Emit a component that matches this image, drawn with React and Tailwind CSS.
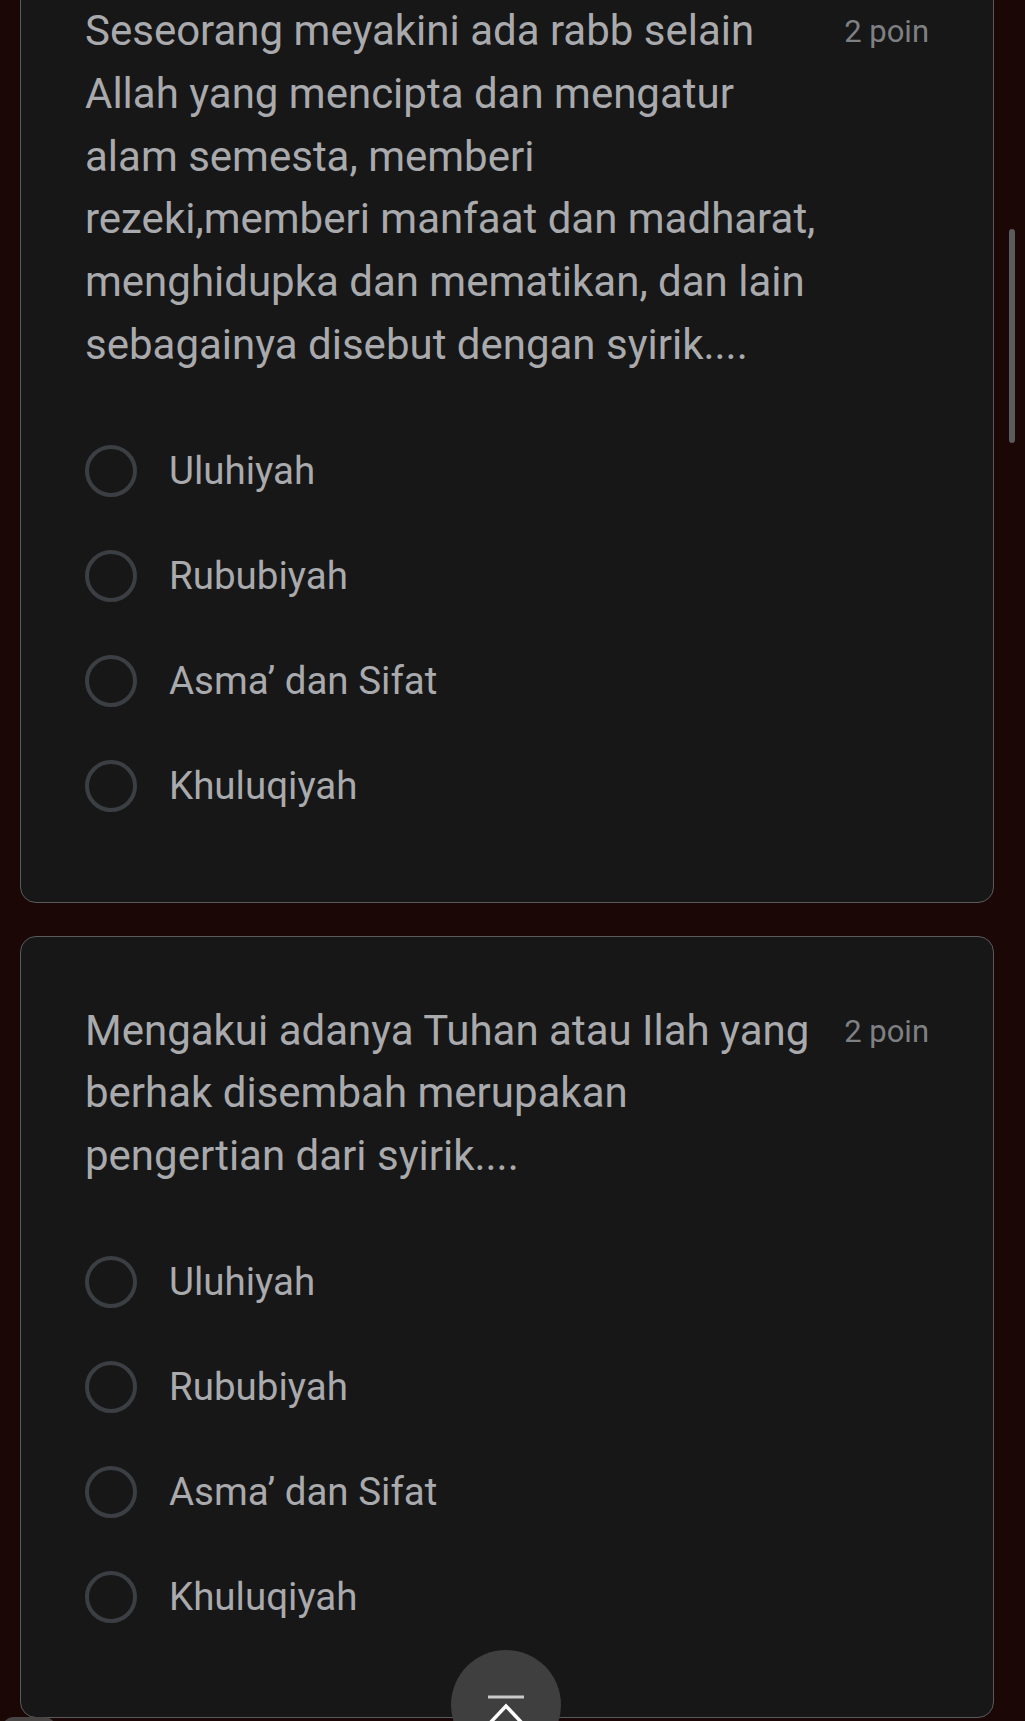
const OPTIONS = ['Uluhiyah', 'Rububiyah', 'Asma’ dan Sifat', 'Khuluqiyah']

const QUESTIONS = [
  {
    id: 'q1',
    title:
      'Seseorang meyakini ada rabb selain Allah yang mencipta dan mengatur alam semesta, memberi rezeki,memberi manfaat dan madharat, menghidupka dan mematikan, dan lain sebagainya disebut dengan syirik....',
    points: '2 poin',
  },
  {
    id: 'q2',
    title: 'Mengakui adanya Tuhan atau Ilah yang berhak disembah merupakan pengertian dari syirik....',
    points: '2 poin',
  },
]

function Radio({ label }) {
  return (
    <label className="flex h-[105px] items-center">
      <span className="block h-[52px] w-[52px] shrink-0 rounded-full border-[4px] border-[#3b3e42]" />
      <span className="ml-[32px] text-[38.5px] leading-[52px] text-[#a9aaae]">{label}</span>
    </label>
  )
}

function QuestionCard({ q, first }) {
  return (
    <div
      className={
        'rounded-[16px] border border-[#5a5a5e] bg-[#171717] pl-[64px] pr-[64px] ' +
        (first ? '-mt-[63px] pt-[62px] pb-[63px]' : 'pt-[63px] pb-[67px]')
      }
    >
      <div className="flex items-start">
        <div className="w-[742px] text-[42px] leading-[62.75px] text-[#a9aaae]">{q.title}</div>
        <div className="ml-auto pt-[12px] text-[31px] leading-[40px] text-[#7f8083] whitespace-nowrap">{q.points}</div>
      </div>
      <div className="mt-[42px] flex flex-col">
        {OPTIONS.map((o) => (
          <Radio key={o} label={o} />
        ))}
      </div>
    </div>
  )
}

export default function App() {
  return (
    <div
      className="relative h-[1721px] w-[1025px] overflow-hidden bg-[#1c0707]"
      style={{ fontFamily: 'Roboto, "Noto Sans", sans-serif' }}
    >
      <div className="flex flex-col gap-[33px] pl-[20px] pr-[31px]">
        {QUESTIONS.map((q, i) => (
          <QuestionCard key={q.id} q={q} first={i === 0} />
        ))}
      </div>

      {/* scrollbar thumb */}
      <div className="absolute left-[1009px] top-[229px] h-[214px] w-[6px] rounded-full bg-[#5b5b5b]" />

      {/* back to top button */}
      <div className="absolute left-[451px] top-[1650px] flex h-[110px] w-[110px] justify-center rounded-full bg-[#3f3f3f]">
        <svg width="40" height="40" viewBox="0 0 40 40" className="mt-[44px]" fill="none">
          <line x1="2" y1="3" x2="38" y2="3" stroke="#c9c9c9" strokeWidth="3" />
          <polyline points="3,30 20,12 37,30" stroke="#ffffff" strokeWidth="3.5" />
        </svg>
      </div>

      {/* partially visible control at bottom-left */}
      <div className="absolute left-[3px] top-[1717px] h-[20px] w-[52px] rounded-t-[10px] bg-[#4a4545]" />
    </div>
  )
}
